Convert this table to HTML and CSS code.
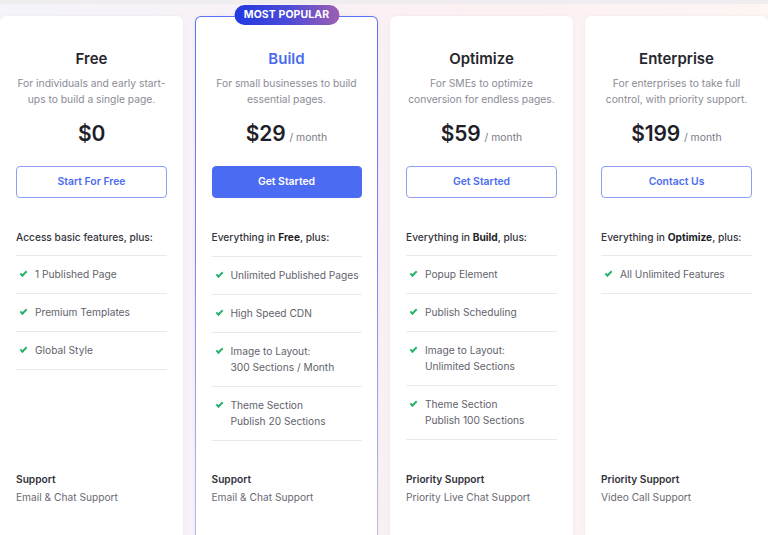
FILE: index.html
```html
<!DOCTYPE html>
<html>
<head>
<meta charset="utf-8">
<link rel="stylesheet" href="styles.css">
</head>
<body>
<div class="page">
  <div class="plans">
    <section class="card">
      <h2 class="title">Free</h2>
      <p class="desc">For individuals and early start-<br>ups to build a single page.</p>
      <div class="price"><span class="amount">$0</span></div>
      <a class="btn">Start For Free</a>
      <p class="lead">Access basic features, plus:</p>
      <ul class="features">
        <li><span class="check"></span><span>1 Published Page</span></li>
        <li><span class="check"></span><span>Premium Templates</span></li>
        <li><span class="check"></span><span>Global Style</span></li>
      </ul>
      <div class="support"><strong>Support</strong><span>Email &amp; Chat Support</span></div>
    </section>

    <section class="card popular">
      <div class="badge">MOST POPULAR</div>
      <h2 class="title blue">Build</h2>
      <p class="desc">For small businesses to build<br>essential pages.</p>
      <div class="price"><span class="amount">$29</span><span class="per">/ month</span></div>
      <a class="btn solid">Get Started</a>
      <p class="lead">Everything in <b>Free</b>, plus:</p>
      <ul class="features">
        <li><span class="check"></span><span>Unlimited Published Pages</span></li>
        <li><span class="check"></span><span>High Speed CDN</span></li>
        <li><span class="check"></span><span>Image to Layout:<br>300 Sections / Month</span></li>
        <li><span class="check"></span><span>Theme Section<br>Publish 20 Sections</span></li>
      </ul>
      <div class="support"><strong>Support</strong><span>Email &amp; Chat Support</span></div>
    </section>

    <section class="card">
      <h2 class="title">Optimize</h2>
      <p class="desc">For SMEs to optimize<br>conversion for endless pages.</p>
      <div class="price"><span class="amount">$59</span><span class="per">/ month</span></div>
      <a class="btn">Get Started</a>
      <p class="lead">Everything in <b>Build</b>, plus:</p>
      <ul class="features">
        <li><span class="check"></span><span>Popup Element</span></li>
        <li><span class="check"></span><span>Publish Scheduling</span></li>
        <li><span class="check"></span><span>Image to Layout:<br>Unlimited Sections</span></li>
        <li><span class="check"></span><span>Theme Section<br>Publish 100 Sections</span></li>
      </ul>
      <div class="support"><strong>Priority Support</strong><span>Priority Live Chat Support</span></div>
    </section>

    <section class="card">
      <h2 class="title">Enterprise</h2>
      <p class="desc">For enterprises to take full<br>control, with priority support.</p>
      <div class="price"><span class="amount">$199</span><span class="per">/ month</span></div>
      <a class="btn">Contact Us</a>
      <p class="lead">Everything in <b>Optimize</b>, plus:</p>
      <ul class="features">
        <li><span class="check"></span><span>All Unlimited Features</span></li>
      </ul>
      <div class="support"><strong>Priority Support</strong><span>Video Call Support</span></div>
    </section>
  </div>
</div>
</body>
</html>
```

FILE: styles.css
```css
* { box-sizing: border-box; }
html, body { margin: 0; padding: 0; }
body {
  width: 768px;
  height: 535px;
  overflow: hidden;
  font-family: Inter, "Noto Sans", sans-serif;
  background: linear-gradient(90deg, #f5f4fb 0%, #f9f1f6 40%, #fcf0f3 60%, #fdf6f3 100%);
}
.page {
  border-top: 4px solid #efedef;
  padding: 12px 0 0 0;
}
.plans {
  display: grid;
  grid-template-columns: repeat(4, 183px);
  column-gap: 12px;
}
.card {
  position: relative;
  height: 540px;
  background: #fff;
  border-radius: 6px;
  padding: 33px 16px 51px;
  display: flex;
  flex-direction: column;
  box-shadow: 0 0 3px rgba(120, 110, 140, 0.10);
}
.card.popular {
  border: 1.5px solid transparent;
  background:
    linear-gradient(#fff, #fff) padding-box,
    linear-gradient(180deg, #5a72f6 0%, #7e86f2 45%, #c7bdf0 100%) border-box;
  padding: 32px 15.5px 50px;
}
.popular .features { margin-top: 11px; }
.badge {
  position: absolute;
  top: -12px;
  left: 50%;
  transform: translateX(-50%);
  height: 20px;
  width: 105px;
  border-radius: 10px;
  background: linear-gradient(90deg, #2139e0 0%, #4b49d8 50%, #9c5fb3 100%);
  color: #fff;
  font-size: 10.5px;
  font-weight: 700;
  line-height: 20px;
  text-align: center;
  letter-spacing: 0.1px;
}
.title {
  margin: 0;
  text-align: center;
  font-size: 15px;
  line-height: 20px;
  font-weight: 600;
  color: #26262f;
}
.title.blue { color: #4a6bf0; }
.desc {
  margin: 6px 0 0;
  text-align: center;
  font-size: 10.3px;
  line-height: 16px;
  color: #8b8b96;
  white-space: nowrap;
}
.price {
  margin-top: 12px;
  text-align: center;
  line-height: 30px;
  height: 30px;
}
.amount {
  font-size: 21px;
  font-weight: 600;
  color: #1f1f29;
  letter-spacing: -0.2px;
}
.per {
  font-size: 10.4px;
  color: #7a7a86;
  margin-left: 4px;
}
.btn {
  display: block;
  margin-top: 17px;
  height: 32px;
  line-height: 30px;
  border: 1px solid #8fa0f4;
  border-radius: 4px;
  text-align: center;
  font-size: 10.4px;
  font-weight: 600;
  color: #4d6cf2;
  cursor: pointer;
}
.btn.solid {
  background: #4b6cf2;
  border-color: #4b6cf2;
  color: #fff;
}
.lead {
  margin: 31px 0 0;
  font-size: 10.2px;
  line-height: 16px;
  font-weight: 500;
  color: #34343c;
}
.lead b { font-weight: 700; color: #1f1f29; }
.features {
  list-style: none;
  margin: 10px 0 0;
  padding: 0;
  border-top: 1px solid #eae9ef;
}
.features li {
  display: flex;
  align-items: flex-start;
  gap: 8px;
  padding: 10px 0 11px 4px;
  border-bottom: 1px solid #eae9ef;
  font-size: 10.2px;
  line-height: 16px;
  color: #62626c;
}
.check {
  flex: none;
  width: 7px;
  height: 4px;
  margin-top: 5px;
  border-left: 2px solid #27b26e;
  border-bottom: 2px solid #27b26e;
  transform: rotate(-45deg);
}
.support {
  margin-top: auto;
  display: flex;
  flex-direction: column;
  font-size: 10.2px;
  line-height: 16px;
  color: #6a6a74;
}
.support strong {
  font-weight: 600;
  color: #34343c;
  margin-bottom: 2px;
}
```
